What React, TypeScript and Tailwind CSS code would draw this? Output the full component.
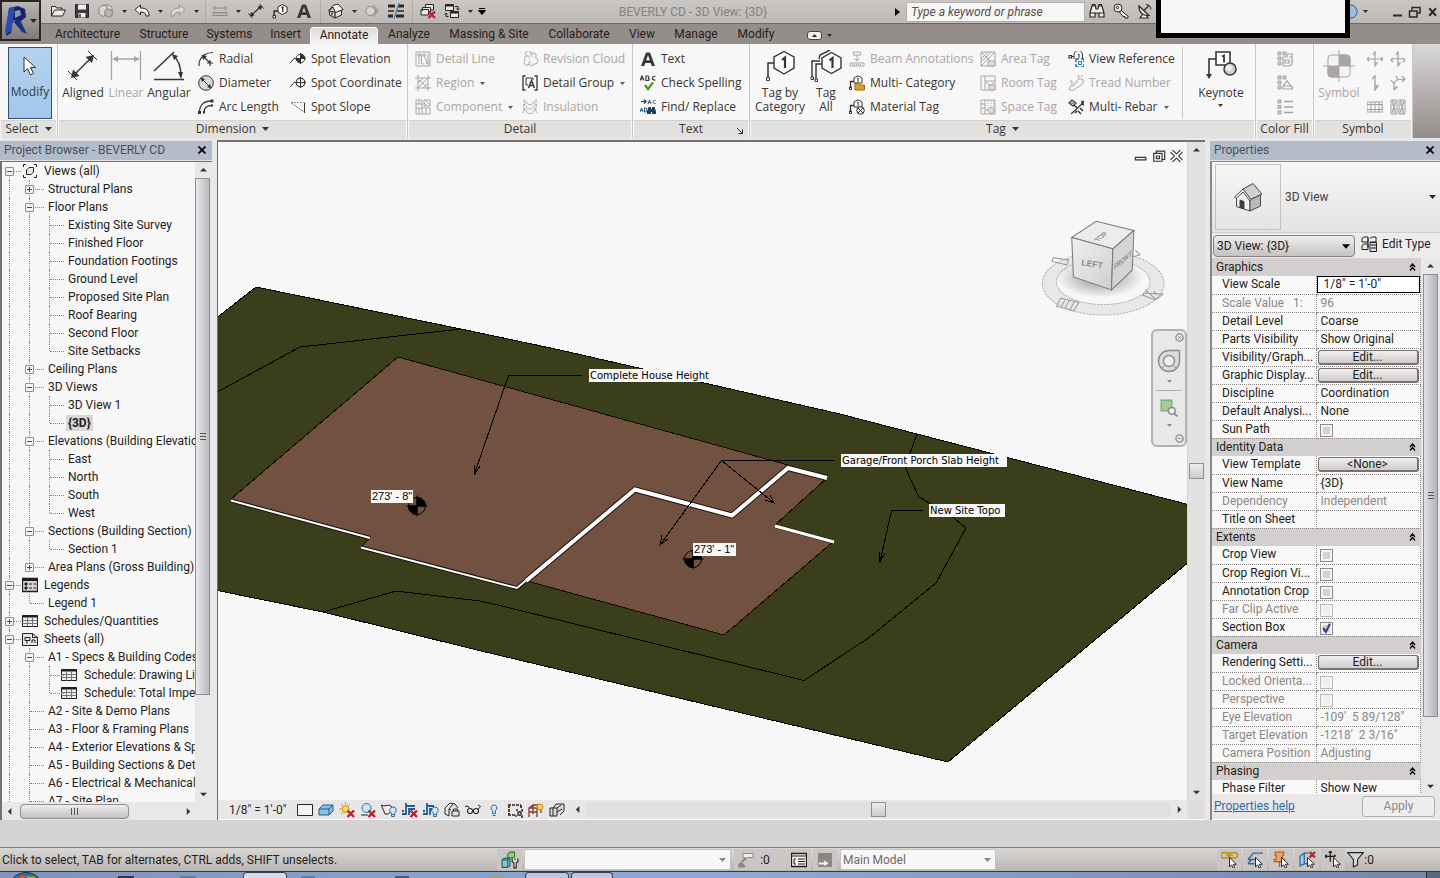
import React from "react";

type Kids = { children?: React.ReactNode };

function Svg({ children, className = "w-4 h-4", box = "0 0 16 16" }: Kids & { className?: string; box?: string }) {
  return (
    <svg viewBox={box} className={"shrink-0 " + className} fill="none" stroke="currentColor" strokeWidth="1" aria-hidden="true">
      {children}
    </svg>
  );
}

function Down({ className = "w-[7px] h-[4px]" }: { className?: string }) {
  return (
    <svg viewBox="0 0 7 4" className={"shrink-0 " + className} fill="currentColor" aria-hidden="true">
      <path d="M0 0H7L3.5 4Z" />
    </svg>
  );
}

const RED_X = <path d="M8.5 8.5L15 15M15 8.5L8.5 15" stroke="#b8202a" strokeWidth="2.4" />;
const BULB = <path d="M10.5 12.5v2h3v-2M12 5a3.2 3.2 0 0 1 1.6 6v1.5h-3.2V11A3.2 3.2 0 0 1 12 5Z" fill="#cfe6fa" stroke="#2d6ea8" />;
const POINTER = <path d="M8 6v9l2-2 1.5 3 1.5-.8-1.5-2.7H14.500Z" fill="#fff" stroke="#222" strokeWidth=".9" />;

const ic = {
  open: <Svg><path d="M1.500 13V3.500h4l1 1.500h5.500v2M1.500 13l3-6H15.500l-3 6Z" fill="#ececec" /></Svg>,
  save: <Svg><path d="M1.500 1.500h13v13h-13Z" fill="#3b3b45" /><path d="M4 1.500h8v5H4ZM4.500 10h7v4.500h-7Z" fill="#eee" stroke="none" /><path d="M6 11v3" strokeWidth="1.500" /></Svg>,
  cubes: <Svg className="w-4 h-4 text-[#8a8683]"><path d="M1 4.500 5 2l4 1.500V11L5 13.500 1 11ZM5 3l4-1.500L14 4v7l-4 2" fill="#d9d6d4" /><circle cx="10.500" cy="10" r="4" fill="#b9b5b2" /></Svg>,
  undo: <Svg><path d="M1 6.500 6.500 2v3C12 5 15 7 15 13H12c0-3-2-4-5.500-4v3Z" fill="#f4f4f4" /></Svg>,
  redo: <Svg className="w-4 h-4 text-[#96918e]"><path d="M15 6.500 9.500 2v3C4 5 1 7 1 13h3c0-3 2-4 5.500-4v3Z" fill="#dedbd9" /></Svg>,
  measure: <Svg className="w-4 h-4 text-[#8d8885]"><path d="M1 5h14M3.500 3 1 5l2.500 2M12.500 3 15 5l-2.500 2M1 9.500h14v3H1ZM4 9.500V11M7 9.500V11M10 9.500V11M13 9.500V11" /></Svg>,
  dim: <Svg><path d="M3 12.500 13 3.500" strokeWidth="1.200" /><path d="M2 13.500 3 9l3.500 3.500ZM14 2.500 9.500 3.500 13 7Z" fill="currentColor" stroke="none" /><path d="m.5 10.500 4 4.500M11.500 1l4 4.500" /></Svg>,
  tag1: <Svg><path d="M2 14V8h4" strokeWidth="1.300" /><path d="M1 12.500h2.500V15H1Z" fill="#fff" /><path d="M10.500 1.500 15 4v5l-4.500 2.500L6 9V4Z" fill="#fff" /><path d="M9.500 5l1.300-1v5" strokeWidth="1.300" /></Svg>,
  bigA: <Svg><path d="M1 15 6 1.500h4L15 15h-3.300l-1-3H5.300l-1 3ZM6.200 9.300h3.600L8 4Z" fill="#3c3733" fillRule="evenodd" stroke="none" /></Svg>,
  home: <Svg><path d="M1.500 8.500V12L7 15l6.500-3V7L7 9Z" fill="#dedede" /><path d="M.5 8 5 2.500l5-1.500L15 6.500 7.500 9.500 5 4Z" fill="#f6f6f6" /><path d="M7 9v6M4 9.500v3" strokeWidth="1.300" /></Svg>,
  section: <Svg className="w-4 h-4 text-[#8f8a87]"><path d="M3 4h6V1l6 7-6 7v-3H3Z" fill="#a5a09d" stroke="none" /><circle cx="6.500" cy="8" r="4.500" fill="#d6d3d1" /></Svg>,
  lines: <Svg><path d="M0 3h7M10 3h6M0 13h5M8 13h8" strokeWidth="3" /><path d="M0 8h6M9 8h7" strokeWidth="1.500" /><path d="m11 0-5 16" stroke="#3b87c8" strokeWidth="1.300" /></Svg>,
  closeWin: <Svg><path d="M5.500 5V1.500h8V7H11M2.500 8V4.500h8V10M1 12V6.500h7.500V12Z" fill="#e8e6e5" />{RED_X}</Svg>,
  switchWin: <Svg><path d="M1.500 1.500h8v6h-8ZM6.500 8.500h8v6h-8Z" fill="#e8e6e5" /><path d="M1.500 2.500h8M6.500 9.500h8" strokeWidth="1.800" /><path d="M11 3.500h3V7M12.500 5.500 14 7l1.500-1.500M4.500 13.500H2V10M.5 11.500 2 10l1.500 1.500" /></Svg>,
  bino: <Svg><path d="M1 10 3 3h3.500l.5 3h2l.5-3H13l2 7v4h-5v-4H6v4H1Z" fill="#eee" strokeWidth="1.200" /><path d="M3.500 3V1.500H6V3M10 3V1.500h2.500V3M1 10h5M10 10h5" strokeWidth="1.200" /></Svg>,
  key: <Svg><path d="M8 7.500 15 13v2h-3v-1.500h-2L6.500 9" fill="#eee" /><circle cx="5" cy="5" r="4" fill="#eee" /><circle cx="4.500" cy="4.500" r="1.200" /></Svg>,
  dish: <Svg><path d="M2 3c0 7 4 10 10 9.500ZM6 11l-3 4h8l-1.500-2.500M7 7.500l5-5" fill="#eee" strokeWidth="1.200" /><path d="M9 1.500c3 0 5 2 5 5" /></Svg>,
  radial: <Svg><path d="M1 15C1 7 6 2 15 1.500" strokeWidth="1.200" /><path d="m5 5 6.500 6.500M12 9v6M9 12h6" strokeWidth="1.200" /><path d="M3.500 3.500 9 5 5 9Z" fill="currentColor" stroke="none" /></Svg>,
  diameter: <Svg><circle cx="8" cy="8" r="7.300" fill="#d8d8d8" /><path d="m3.500 3.500 9 9" /><path d="M2.500 2.500 7 4 4 7ZM13.500 13.500 9 12l3-3Z" fill="currentColor" stroke="none" /></Svg>,
  arc: <Svg><path d="M1.500 13C1.500 6 6 2 13 2M6 13c0-4 3-6.500 8-6.500" strokeWidth="1.300" /><path d="M0 12h3v3H0ZM12.500.5h3v3h-3ZM5 12h2v2.500H5ZM13 5.500h2v2h-2Z" fill="currentColor" stroke="none" /></Svg>,
  spotE: <Svg><path d="M0 12 4 7.500h12M10.500 2v11" /><circle cx="10.500" cy="7.500" r="4.300" fill="#fff" /><path d="M10.500 3.200a4.300 4.300 0 0 1 4.300 4.300h-4.300ZM10.500 11.800a4.300 4.300 0 0 1-4.300-4.300h4.300Z" fill="currentColor" /></Svg>,
  spotC: <Svg><path d="M0 12 4 7.500h12M10.500 2v11" /><circle cx="10.500" cy="7.500" r="4.300" strokeWidth="1.200" /></Svg>,
  spotS: <Svg><path d="M1 3.500h13.500V14" stroke="#8a8a8a" strokeDasharray="2 1" /><path d="m1.500 4 12.500 9" stroke="#2d62a8" strokeDasharray="2 1" /><path d="M14.500 4v10" /></Svg>,
  detLine: <Svg><path d="M1 1h14v14H1ZM4 13V4M4 3.500h2.500V13h3M13 3v10M9 4l3 8" /><path d="M3 3h2v2H3ZM8 3h2v2H8ZM12 11h2v2h-2Z" fill="#f8f7f7" /></Svg>,
  region: <Svg><path d="M3 0v16M13 0v16M0 3h16M0 13h16M3 8l5-5M3 13 13 3M8 13l5-5M4 5l8 7" /></Svg>,
  comp: <Svg><path d="M1 1h6v8h8v6H1ZM9 1h6v6H9ZM1 5h6M1 9h6v6M4 1v4M4 9v6M11 9v6" /><path d="m9 4 3 3M10 1l5 5" /></Svg>,
  cloud: <Svg><path d="M5 5a2.800 2.800 0 1 1 4-2 2.800 2.800 0 1 1 4.500 4 3 3 0 1 1-1.500 6 3 3 0 0 1-5 .5A3 3 0 1 1 3 9a2.600 2.600 0 0 1 2-4Z" /><path d="M5 5c2-.5 3 1 2 2.500M9 3c0 2 1 2.500 2 2.500M7 13.500c-.5-2 .5-3 2-3" /></Svg>,
  group: <Svg><path d="M3.500 1H1v14h2.500M12.500 1H15v14h-2.500" strokeWidth="1.300" /><path d="M4 10V3h7v2M4 10h2" /><path d="m6.500 13 3-7.500 3 7.500M7.500 10.500h4" strokeWidth="1.500" /></Svg>,
  insul: <Svg><path d="M1 1c5 0 2 4.500 7 4.500S10 1 15 1M1 5.500C6 5.500 3 10 8 10s2-4.500 7-4.500M1 10c5 0 2 4.500 7 4.500S10 10 15 10M1 3c2 0 3 1.500 1 3s1 2 1 4-2 2-2 4M15 3c-2 0-3 1.500-1 3s-1 2-1 4 2 2 2 4" /></Svg>,
  abc: <Svg><path d="M0 5.500 2 1l2 4.500M.8 4h2.500M6 1v4.500h2c1.600 0 1.400-2.200 0-2.200C9.300 3.200 9 1 8 1ZM15.500 1.500c-3.500-1.500-4.500 4-.1 3.500" strokeWidth="1.200" /><path d="m5 10 3 4 5-6.500" stroke="#4d9a22" strokeWidth="2.300" /></Svg>,
  find: <Svg><path d="M1 2.500h5M4 .5l2 2-2 2" strokeWidth="1.200" /><path d="m8 5 1.500-4L11 5M8.500 3.500h2M15.500 1.500c-3-1-3.500 3.500 0 3M0 13l1.500-4L3 13M.5 11.500h2M4.500 9v4H6c1 0 1-2 0-2 1 0 .8-2 0-2Z" stroke="#285a80" /><path d="M7 12.500 8.500 8H11v2h1V8h2.500L16 12.500V15h-4v-2h-1v2H7Z" fill="#1f3d5c" stroke="none" /></Svg>,
  beam: <Svg><path d="M4.500 1h7v3h-7ZM8 4v6M5.500 7.500 8 10l2.500-2.500M1 12h14v3H1Z" /><path d="M3 13.500h10" strokeDasharray="1 1" /></Svg>,
  multi: <Svg><path d="M1.500 13V6.500H5" strokeWidth="1.300" /><path d="M.5 12h2v2.500h-2Z" /><path d="M9 .800 13 3v5H5V3Z" fill="#fff" /><path d="M8 3.500 9 3v4" /><path d="M6 8.500h4l1 1.500h4.500v5H6Z" fill="#e0a224" stroke="#9c6a0c" /></Svg>,
  material: <Svg><path d="M1.500 13V6.500H5" strokeWidth="1.300" /><path d="M.5 12h2v2.500h-2Z" /><path d="M9 .800 13 3v5H5V3Z" fill="#fff" /><path d="M8 3.500 9 3v4" /><circle cx="11.500" cy="11.500" r="3.800" fill="#eee" /><path d="m9 14 5-5M9 9l5 5" /></Svg>,
  area: <Svg><path d="M1 1h14v14H1ZM1 1l14 14M15 1 1 15M1 8l7-7M1 11 11 1" /><path d="M8 10h7v5H8Z" fill="#ddd" /></Svg>,
  room: <Svg><path d="M1 1h14v14H1ZM5 1v14M5 6h10" /><path d="m6 7 8 7M14 7l-5 5" /><path d="M9 10h6v5H9Z" fill="#ddd" /></Svg>,
  space: <Svg><path d="M1 1h14v14H1ZM5 1v14M1 5h4M1 9h4M5 11h10" /><path d="M8 2v8M11 2v8M13.500 2v8" strokeDasharray="1 1" /><path d="m11 8 4 3.500-4 3.500-3.500-3.500Z" fill="#ddd" /></Svg>,
  viewRef: <Svg><path d="M1 4.500h2.500V7H1ZM3.500 5.500H6" strokeWidth="1.200" /><path d="M6 8V3.500A4.200 4.200 0 0 1 14.500 4v4M10 3.500l1-.5v4" /><path d="M8 11V8h3M13 8h3v3M16 13v3h-3M11 16H8v-3" stroke="#1f79b8" strokeWidth="1.500" /><path d="M10.500 10.500h3v3h-3Z" stroke="#1f79b8" /></Svg>,
  tread: <Svg><path d="M1 14.500 5 15.500l10-7v-4l-3-1-3 2v2l-3 1v2l-4 1ZM2 6h2v4M9 1h2v3M13 1h2" /></Svg>,
  rebar: <Svg><path d="m1 4 3-3 4 3-3 3ZM3 4h3M6 6l3 3M3 15 15 4" strokeWidth="1.200" /><path d="M14 2.500h2V6l-2-1ZM7 14l2-2M10 12l3 3M12 9l3 3" strokeWidth="1.500" /></Svg>,
  cf1: <Svg><path d="M1 1h3v3H1ZM6 1h3v3H6ZM1 6h3v3H1ZM1 11h3v3H1Z" fill="#d5d2d0" /><path d="M6 6h4V3h5v10l-2 2H6ZM8 9h4v3H8ZM12 6h3" strokeWidth="1.200" /></Svg>,
  cf2: <Svg><path d="M1 1h3v3H1ZM6 1h3v3H6ZM1 6h3v3H1ZM1 11h3v3H1Z" fill="#d5d2d0" /><path d="M6 14v-3l4-5 4 5 1.500 1v2ZM7 11h7" strokeWidth="1.200" /></Svg>,
  cf3: <Svg><path d="M1 1h3v3H1ZM1 6.500h3v3H1ZM1 12h3v3H1Z" fill="#d5d2d0" /><path d="M7 2.500h9M7 8h9M7 13.500h9" strokeWidth="1.300" /></Svg>,
  s1: <Svg><path d="M8 0v15l2-3H8M0 8h16M2 6 0 8l2 2M14 6l2 2-2 2M6 4l2-3" strokeWidth="1.200" /></Svg>,
  s2: <Svg><path d="M8 0v15l2-3H8M1 9c0-2 14-2 14 0M3 11 1 9l2-2M13 7l2 2-2 2M6 4l2-3" strokeWidth="1.200" /></Svg>,
  s3: <Svg><path d="M8 0v15l3-4H8M5 4l3-3" strokeWidth="1.300" /></Svg>,
  s4: <Svg><path d="M4 15V9c0-4 4-5 11-5M4 9 1 5M12 1l3 3-3 3M4 15l3-3H4M8 5 6 1" strokeWidth="1.200" /></Svg>,
  s5: <Svg><path d="M0 3h16v10H0ZM0 5.500h16M0 10.500h16M4 3v10M8 3v10M12 3v10M14 6l2 2-2 2" /></Svg>,
  s6: <Svg><path d="M1 1h6v14H1ZM9 1h6v14H9Z" /><path d="m2 14 4-12M10 14l4-12M3 1v6M11 1v6M5 9v6M13 9v6" strokeWidth="1.300" /></Svg>,
};

const big = {
  aligned: <Svg box="0 0 32 32" className="w-8 h-8"><path d="M6 26 25 7" strokeWidth="1.500" /><path d="M4 28 6 19.500l6.500 6.500ZM27 5l-8.500 2L25 13Z" fill="currentColor" stroke="none" /><path d="m1 21 9 9M21 1l9 9" /></Svg>,
  linear: <Svg box="0 0 32 32" className="w-8 h-8"><path d="M1.500 1v29M30.500 1v29M4 9h24" strokeWidth="1.300" /><path d="m2 9 6-3v6ZM30 9l-6-3v6Z" fill="currentColor" stroke="none" /></Svg>,
  angular: <Svg box="0 0 32 32" className="w-8 h-8"><path d="M1 29.500h30M1 21 21 2M20 5c6 5 8 13 8 22" strokeWidth="1.500" /><path d="m19 4 6 2-4 4ZM28 29l-3-7h5Z" fill="currentColor" stroke="none" /></Svg>,
  tagCat: <Svg box="0 0 32 34" className="w-8 h-[34px]"><path d="M4 29V13h6" strokeWidth="1.500" /><path d="M2.500 27.500h3v3h-3Z" fill="#fff" /><path d="M20 1.500 30 7v11l-10 6-10-6V7Z" fill="#fcfcfc" strokeWidth="1.400" /><path d="m18 10 3-2.500V18" strokeWidth="2.200" /></Svg>,
  tagAll: <Svg box="0 0 32 34" className="w-8 h-[34px]"><path d="M2 28V11h8M6 30V14h7M9 9l1-4 10-5" strokeWidth="1.400" /><path d="M1 27h2.500v2.500H1ZM5 29h2.500v2.500H5Z" fill="#fff" /><path d="M21.500 2.500 31 8v10l-9.500 5.500L12 18V8Z" fill="#fcfcfc" strokeWidth="1.400" /><path d="m19.500 10.500 3-2.500v10" strokeWidth="2.200" /></Svg>,
  keynote: <Svg box="0 0 32 32" className="w-8 h-8"><path d="M4 27V9h7" strokeWidth="1.600" /><path d="m4 29-3-5h6Z" fill="currentColor" stroke="none" /><path d="M11 2h14v13H11Z" fill="#fff" strokeWidth="1.600" /><path d="m17 6.500 2-1v7" strokeWidth="1.800" /><circle cx="25" cy="19" r="6" fill="#cfcfcf" strokeWidth="1.500" /><circle cx="24" cy="18" r="3" fill="#ececec" stroke="none" /></Svg>,
  symbol: <Svg box="0 0 32 32" className="w-8 h-8"><path d="M16 0v32M0 16h32" /><path d="M8 5h16a3 3 0 0 1 3 3v16a3 3 0 0 1-3 3H8a3 3 0 0 1-3-3V8a3 3 0 0 1 3-3Z" fill="#f4f3f3" /><path d="M16 5h8a3 3 0 0 1 3 3v8H16ZM5 16h11v11H8a3 3 0 0 1-3-3Z" fill="currentColor" /></Svg>,
};

function Small({ icon, label, off, caret }: { icon: React.ReactNode; label: string; off?: boolean; caret?: boolean }) {
  return (
    <button type="button" disabled={off} className={"flex h-6 items-center gap-[5px] whitespace-nowrap " + (off ? "text-[#aaa5a3]" : "text-[#3a3431]")}>
      {icon}
      <span>{label}</span>
      {caret && <Down className="ml-px h-[3px] w-[5px] text-[#555]" />}
    </button>
  );
}

function Big({ icon, lines, off, w }: { icon: React.ReactNode; lines: string[]; off?: boolean; w: string }) {
  return (
    <button type="button" disabled={off} className={w + " flex h-[72px] shrink-0 flex-col items-center whitespace-nowrap pt-[3px] leading-[14px] " + (off ? "text-[#aaa5a3]" : "text-[#3a3431]")}>
      <span className="flex h-[36px] items-start">{icon}</span>
      {lines.map((l) => (
        <span key={l}>{l}</span>
      ))}
    </button>
  );
}

function Panel({ title, w, children, arrow, launcher, body = "" }: Kids & { title: string; w: string; arrow?: boolean; launcher?: boolean; body?: string }) {
  return (
    <section className={w + " flex shrink-0 flex-col border-r border-[#c9c5c3]"}>
      <div className={"flex h-[76px] items-start pt-[3px] " + body}>{children}</div>
      <div className="relative mx-px flex h-[18px] items-center justify-center gap-[6px] border-t border-[#d3d0ce] bg-[#e3e1e0] pb-[2px] text-[#3a3431]">
        {title}
        {arrow && <Down className="h-[4px] w-[7px]" />}
        {launcher && (
          <button type="button" aria-label="Text settings" className="absolute right-[5px] top-[7px]">
            <Svg box="0 0 6 6" className="h-[6px] w-[6px]"><path d="M0 0 5 5M5.500 1.500v4h-4" /></Svg>
          </button>
        )}
      </div>
    </section>
  );
}

function QBtn({ icon, label, w = "w-6" }: { icon: React.ReactNode; label: string; w?: string }) {
  return (
    <button type="button" aria-label={label} className={w + " flex h-6 shrink-0 items-center justify-center pb-px"}>
      {icon}
    </button>
  );
}
const C = ({ label }: { label: string }) => <QBtn w="w-3" label={label} icon={<Down className="h-[3px] w-[5px]" />} />;
const Sep = ({ w }: { w: string }) => <span className={w + " flex shrink-0 justify-center"}><span className="h-[22px] w-px bg-[#aeaaa7]" /></span>;

const tabs: [string, string][] = [
  ["Architecture", "w-[85px]"], ["Structure", "w-[68px]"], ["Systems", "w-[63px]"], ["Insert", "w-[49px]"], ["Annotate", "w-[68px]"],
  ["Analyze", "w-[62px]"], ["Massing & Site", "w-[98px]"], ["Collaborate", "w-[82px]"], ["View", "w-[44px]"], ["Manage", "w-[64px]"], ["Modify", "w-[56px]"],
];

function Header() {
  return (
    <header className="relative flex h-11 shrink-0 bg-[#958d8a]">
      <button type="button" aria-label="Application menu" className="flex h-[41px] w-[41px] shrink-0 items-center border-2 border-[#2a2525] bg-linear-to-b from-[#b9b5b3] to-[#7f7a78]">
        <svg viewBox="0 0 28 32" className="h-8 w-7" aria-hidden="true">
          <path d="M7 3 16 1l7 3 1 8-6 5-7-2-2 13-5 3Z" fill="#16236b" />
          <path d="M7 3 13 2 9 26l-5 3-1-3Z" fill="#2c4bb0" />
          <path d="m11 16 7-1 7 14-5-2Z" fill="#1b2f8c" />
          <path d="M13 6l5-1 1 5-6 3Z" fill="#8f97b8" />
        </svg>
        <Down className="h-[4px] w-[7px]" />
      </button>
      <div className="flex min-w-0 flex-1 flex-col">
        <div className="flex h-6 items-center border-b border-[#6d6765] bg-linear-to-b from-[#cbc7c5] to-[#bdb9b6] pl-[5px]">
          <QBtn icon={ic.open} label="Open" /><QBtn icon={ic.save} label="Save" /><QBtn icon={ic.cubes} label="Synchronize" /><C label="Synchronize options" />
          <QBtn icon={ic.undo} label="Undo" /><C label="Undo list" /><QBtn icon={ic.redo} label="Redo" /><C label="Redo list" /><Sep w="w-[6px]" />
          <QBtn icon={ic.measure} label="Measure" /><C label="Measure options" /><QBtn icon={ic.dim} label="Aligned dimension" /><QBtn icon={ic.tag1} label="Tag by category" />
          <QBtn icon={ic.bigA} label="Text" /><Sep w="w-2" />
          <QBtn icon={ic.home} label="Default 3D view" /><C label="3D view options" /><QBtn icon={ic.section} label="Section" /><QBtn icon={ic.lines} label="Thin lines" /><Sep w="w-2" />
          <QBtn icon={ic.closeWin} label="Close hidden windows" /><QBtn icon={ic.switchWin} label="Switch windows" /><C label="Window list" />
          <QBtn w="w-3" label="Customize quick access" icon={<Svg box="0 0 8 7" className="h-[7px] w-[8px] text-black"><path d="M1 .500h6M.5 2.500h7L4 6.500Z" fill="#000" /></Svg>} />
          <h1 className="flex-1 truncate pl-[3px] text-center text-[#84807e]">BEVERLY CD - 3D View: {"{3D}"}</h1>
          <Svg box="0 0 5 8" className="mr-[6px] h-2 w-[5px] text-black"><path d="M0 0 5 4 0 8Z" fill="#000" stroke="none" /></Svg>
          <input type="search" aria-label="Search help" placeholder="Type a keyword or phrase" className="h-5 w-[179px] shrink-0 border border-[#b3afad] bg-[#f7f6f6] px-1 text-xs italic outline-none placeholder:text-[#55504d]" />
          <QBtn icon={ic.bino} label="Find" /><QBtn icon={ic.key} label="Subscription" /><QBtn icon={ic.dish} label="Communication center" />
          <div className="ml-auto flex w-[283px] shrink-0 items-center justify-end">
            <QBtn w="w-[18px]" icon={<Svg className="h-[15px] w-[15px] text-[#31577c]"><circle cx="8" cy="8" r="7" fill="#9fbddb" /></Svg>} label="Help" /><C label="Help options" />
            <button type="button" aria-label="Minimize" className="ml-5"><Svg className="h-4 w-4"><path d="M2 11.500h9" strokeWidth="2" /></Svg></button>
            <button type="button" aria-label="Restore"><Svg className="mr-1 h-4 w-4"><path d="M5 6V3.500h8V9h-2.500M2.500 7h7.500v6H2.500Z" strokeWidth="1.500" /></Svg></button>
            <button type="button" aria-label="Close"><Svg className="mr-px h-3 w-3"><path d="m3 3 9 10M12 3 3 13" strokeWidth="2.500" /></Svg></button>
          </div>
        </div>
        <nav className="flex h-5 items-end pl-1" aria-label="Ribbon tabs">
          {tabs.map(([t, w]) => (
            <button
              type="button"
              key={t}
              className={w + " h-[17px] shrink-0 whitespace-nowrap pb-[3px] leading-[14px] text-[#231d1b] " + (t === "Annotate" ? "rounded-t-sm border border-b-0 border-white bg-linear-to-b from-[#dcdad9] to-[#f8f7f7]" : "")}
            >
              {t}
            </button>
          ))}
          <button type="button" aria-label="Ribbon display" className="ml-[23px] flex h-[18px] items-center gap-[5px]">
            <span className="flex h-[9px] w-[15px] items-center justify-center rounded-[3px] border border-[#444] bg-[#eee]">
              <Down className="h-[3px] w-[5px] rotate-180" />
            </span>
            <Down className="h-[3px] w-[5px]" />
          </button>
        </nav>
      </div>
      <div className="absolute right-[90px] top-0 h-[38px] w-[194px] border-x-[5px] border-b-[5px] border-black bg-[#f8f7f8]" />
    </header>
  );
}

function Ribbon() {
  return (
    <div className="flex h-[94px] shrink-0 bg-[#f8f7f7] [font-family:'Open_Sans','Noto_Sans',sans-serif]">
      <Panel title="Select" w="w-[58px]" arrow body="pl-[8px]">
        <button type="button" className="flex h-[72px] w-[44px] flex-col items-center border border-[#32516e] bg-linear-to-b from-[#b4d2f0] to-[#a3c6ea] pt-[8px]">
          <Svg box="0 0 14 20" className="h-5 w-[14px]"><path d="M1 1v15l3.500-3.500 3 6.500 3-1.500-3-6H12.500Z" fill="#fff" stroke="#333" /></Svg>
          <span className="pt-2 text-[#2b3c50]">Modify</span>
        </button>
      </Panel>
      <Panel title="Dimension" w="w-[350px]" arrow body="pl-[3px]">
        <Big w="w-[44px]" icon={big.aligned} lines={["Aligned"]} />
        <Big w="w-[42px]" icon={big.linear} lines={["Linear"]} off />
        <Big w="w-[44px]" icon={big.angular} lines={["Angular"]} />
        <div className="ml-[7px] w-[92px]">
          <Small icon={ic.radial} label="Radial" />
          <Small icon={ic.diameter} label="Diameter" />
          <Small icon={ic.arc} label="Arc Length" />
        </div>
        <div>
          <Small icon={ic.spotE} label="Spot Elevation" />
          <Small icon={ic.spotC} label="Spot Coordinate" />
          <Small icon={ic.spotS} label="Spot Slope" />
        </div>
      </Panel>
      <Panel title="Detail" w="w-[225px]" body="pl-[7px]">
        <div className="w-[107px]">
          <Small icon={ic.detLine} label="Detail Line" off />
          <Small icon={ic.region} label="Region" off caret />
          <Small icon={ic.comp} label="Component" off caret />
        </div>
        <div>
          <Small icon={ic.cloud} label="Revision Cloud" off />
          <Small icon={ic.group} label="Detail Group" caret />
          <Small icon={ic.insul} label="Insulation" off />
        </div>
      </Panel>
      <Panel title="Text" w="w-[117px]" launcher body="pl-[7px]">
        <div>
          <Small icon={ic.bigA} label="Text" />
          <Small icon={ic.abc} label="Check Spelling" />
          <Small icon={ic.find} label="Find/ Replace" />
        </div>
      </Panel>
      <Panel title="Tag" w="w-[506px]" arrow body="pl-[3px]">
        <Big w="w-[54px]" icon={big.tagCat} lines={["Tag by", "Category"]} />
        <Big w="w-[38px]" icon={big.tagAll} lines={["Tag", "All"]} />
        <div className="ml-1 w-[131px]">
          <Small icon={ic.beam} label="Beam Annotations" off />
          <Small icon={ic.multi} label="Multi- Category" />
          <Small icon={ic.material} label="Material Tag" />
        </div>
        <div className="w-[88px]">
          <Small icon={ic.area} label="Area Tag" off />
          <Small icon={ic.room} label="Room Tag" off />
          <Small icon={ic.space} label="Space Tag" off />
        </div>
        <div className="w-[115px] border-r border-[#c9c5c3]">
          <Small icon={ic.viewRef} label="View Reference" />
          <Small icon={ic.tread} label="Tread Number" off />
          <Small icon={ic.rebar} label="Multi- Rebar" caret />
        </div>
        <div className="flex flex-1 flex-col items-center pl-1">
          <button type="button" className="flex flex-col items-center pt-[3px] leading-[14px] text-[#3a3431]">
            <span className="h-[36px]">{big.keynote}</span>
            Keynote
            <Down className="mt-[4px] h-[3px] w-[5px]" />
          </button>
        </div>
      </Panel>
      <Panel title="Color Fill" w="w-[58px]" body="justify-center text-[#a5a09e]">
        <div>
          {[ic.cf1, ic.cf2, ic.cf3].map((x, i) => (
            <button type="button" disabled key={i} aria-label={["Duct legend", "Pipe legend", "Color fill legend"][i]} className="flex h-6 items-center">{x}</button>
          ))}
        </div>
      </Panel>
      <Panel title="Symbol" w="w-[99px]" body="text-[#a5a09e]">
        <Big w="w-[50px]" icon={big.symbol} lines={["Symbol"]} off />
        <div className="grid grid-cols-2 gap-x-[7px] pl-[3px]">
          {[ic.s1, ic.s2, ic.s3, ic.s4, ic.s5, ic.s6].map((x, i) => (
            <button type="button" disabled key={i} aria-label={["Span direction", "Beam", "Stair path", "Area reinforcement", "Path reinforcement", "Fabric reinforcement"][i]} className="flex h-6 items-center">{x}</button>
          ))}
        </div>
      </Panel>
      <div className="flex-1 bg-linear-to-b from-[#dad8d8] to-[#948d8b]" />
    </div>
  );
}

function Arrow({ dir }: { dir: "up" | "down" | "left" | "right" }) {
  const d = { up: "M0 5 4 1 8 5Z", down: "M0 2H8L4 6Z", left: "M5 0V8L1 4Z", right: "M2 0V8L6 4Z" }[dir];
  return (
    <button type="button" aria-label={"Scroll " + dir} className="flex h-4 w-4 shrink-0 items-center justify-center text-[#333]">
      <Svg box="0 0 8 8" className="h-[7px] w-[7px]"><path d={d} fill="currentColor" stroke="none" /></Svg>
    </button>
  );
}

type Row = { t: string; g: string; box?: "+" | "-"; icon?: "views" | "legend" | "table" | "sheet"; sel?: boolean };
// Guide codes: "|" a passing line, "T" a branch, "L" the last branch, "R" the root.
const rows: Row[] = [
  { t: "Views (all)", g: "R", box: "-", icon: "views" },
  { t: "Structural Plans", g: "|T", box: "+" },
  { t: "Floor Plans", g: "|T", box: "-" },
  { t: "Existing Site Survey", g: "||T" },
  { t: "Finished Floor", g: "||T" },
  { t: "Foundation Footings", g: "||T" },
  { t: "Ground Level", g: "||T" },
  { t: "Proposed Site Plan", g: "||T" },
  { t: "Roof Bearing", g: "||T" },
  { t: "Second Floor", g: "||T" },
  { t: "Site Setbacks", g: "||L" },
  { t: "Ceiling Plans", g: "|T", box: "+" },
  { t: "3D Views", g: "|T", box: "-" },
  { t: "3D View 1", g: "||T" },
  { t: "{3D}", g: "||L", sel: true },
  { t: "Elevations (Building Elevation)", g: "|T", box: "-" },
  { t: "East", g: "||T" },
  { t: "North", g: "||T" },
  { t: "South", g: "||T" },
  { t: "West", g: "||L" },
  { t: "Sections (Building Section)", g: "|T", box: "-" },
  { t: "Section 1", g: "||L" },
  { t: "Area Plans (Gross Building)", g: "|L", box: "+" },
  { t: "Legends", g: "T", box: "-", icon: "legend" },
  { t: "Legend 1", g: "|L" },
  { t: "Schedules/Quantities", g: "T", box: "+", icon: "table" },
  { t: "Sheets (all)", g: "T", box: "-", icon: "sheet" },
  { t: "A1 - Specs & Building Codes", g: "|T", box: "-" },
  { t: "Schedule: Drawing List", g: "||T", icon: "table" },
  { t: "Schedule: Total Impervious", g: "||L", icon: "table" },
  { t: "A2 - Site & Demo Plans", g: "|T" },
  { t: "A3 - Floor & Framing Plans", g: "|T" },
  { t: "A4 - Exterior Elevations & Specs", g: "|T" },
  { t: "A5 - Building Sections & Details", g: "|T" },
  { t: "A6 - Electrical & Mechanical", g: "|T" },
  { t: "A7 - Site Plan", g: "|T" },
];

const treeIcons = {
  views: <Svg><path d="M4 1.500H1.500V4M12 1.500h2.500V4M4 14.500H1.500V12M12 14.500h2.500V12" /><path d="M4.500 7 7 4.500h4.500V9L9 11.500H4.500Z" fill="#e9e9e9" /></Svg>,
  legend: <Svg><path d="M.5 1.500h15v13H.5Z" fill="#d4d4da" strokeWidth="1.300" /><path d="M.5 3h15" strokeWidth="2" /><path d="M3 6h2v2H3ZM3 10h2v2H3Z" fill="currentColor" /><path d="M7 7h3M11.500 7H14M7 11h3M11.500 11H14" /></Svg>,
  table: <Svg><path d="M.5 2.500h15v11H.5Z" fill="#eee" /><path d="M.5 3.500h15" strokeWidth="2" /><path d="M.5 7.500h15M.5 10.500h15M5.500 4v9.500M10.500 4v9.500" stroke="#777" /></Svg>,
  sheet: <Svg><path d="M.5 2.500h10l5 4v8H.5Z" fill="#e7e7ea" /><path d="M10.500 2.500v4h5M3 6.500h5v3H3ZM5 9.500v3M10 12V9h3v3" /></Svg>,
};

function Guide({ code, last, box, root }: { code: string; last: boolean; box?: string; root?: boolean }) {
  const w = !last ? "w-5" : root ? "w-[22px]" : "w-7";
  return (
    <span className={"relative flex h-[18px] shrink-0 " + w}>
      <span className={"w-[10px] border-r border-dotted border-[#8b8785] " + (code === "L" ? "h-[9px]" : code === "R" ? "mt-[9px] h-[9px]" : "h-[18px]")} />
      {last && <span className={"border-b border-dotted border-[#8b8785] " + (code === "R" ? "h-[10px] w-[11px]" : root ? "h-[10px] w-[11px]" : "h-[10px] w-[14px]")} />}
      {box && (
        <span className="absolute left-[5px] top-[5px] h-[9px] w-[9px] rounded-[1px] border border-[#8d8a92] bg-[#f3f2f2]">
          <Svg box="0 0 7 7" className="h-[7px] w-[7px] text-[#3f4a7a]"><path d={box === "+" ? "M1 3.500h5M3.500 1v5" : "M1 3.500h5"} /></Svg>
        </span>
      )}
    </span>
  );
}

function PaneTitle({ children }: Kids) {
  return (
    <div className="flex h-[19px] shrink-0 items-center justify-between bg-[#b3bdca] pb-px pl-1 pr-[6px] text-[#46505c]">
      <h2>{children}</h2>
      <button type="button" aria-label="Close pane"><Svg box="0 0 8 8" className="h-2 w-2 text-black"><path d="m.5.500 7 7M7.500.500l-7 7" strokeWidth="1.700" /></Svg></button>
    </div>
  );
}

function Browser() {
  return (
    <aside className="flex w-[212px] shrink-0 flex-col bg-[#e4e2e2] pt-px">
      <PaneTitle>Project Browser - BEVERLY CD</PaneTitle>
      <div className="mt-px flex min-h-0 flex-1 flex-col border-l-2 border-t border-[#77716f] bg-[#f8f7f7]">
        <div className="flex min-h-0 flex-1">
          <ul className="-ml-[2px] min-w-0 flex-1 overflow-hidden text-[#231d1b]">
            {rows.map((r, i) => (
              <li key={i} className="flex h-[18px] items-center overflow-hidden whitespace-nowrap">
                {r.g.split("").map((c, k) => (
                  <Guide key={k} code={c} last={k === r.g.length - 1} box={k === r.g.length - 1 ? r.box : undefined} root={r.g.length === 1} />
                ))}
                {r.icon && <span className={r.g.length === 1 ? "mr-[6px]" : "-ml-[7px] mr-[7px]"}>{treeIcons[r.icon]}</span>}
                <span className={r.sel ? "-ml-[2px] bg-[#d9d6d5] px-[2px] font-bold" : ""}>{r.t}</span>
              </li>
            ))}
          </ul>
          <div className="flex w-[17px] shrink-0 flex-col bg-[#e9e7e7]">
            <Arrow dir="up" />
            <div className="flex w-[15px] basis-[517px] items-center justify-center border border-[#918d93] bg-linear-to-r from-[#eae9eb] to-[#bbb9c0]">
              <span className="h-[7px] w-[6px] border-y border-[#555] bg-linear-to-b from-transparent from-40% via-[#555] via-50% to-transparent to-60%" />
            </div>
            <div className="flex-1" />
            <Arrow dir="down" />
          </div>
        </div>
        <div className="flex h-[18px] items-center bg-[#e9e7e7]">
          <Arrow dir="left" />
          <div className="ml-[2px] flex h-[15px] w-[109px] items-center justify-center gap-[2px] rounded-sm border border-[#918d93] bg-linear-to-b from-[#efeeee] to-[#c3c0c2]">
            <span className="h-[7px] w-px bg-[#555]" /><span className="h-[7px] w-px bg-[#555]" /><span className="h-[7px] w-px bg-[#555]" />
          </div>
          <div className="flex-1" />
          <Arrow dir="right" />
          <span className="w-4" />
        </div>
      </div>
    </aside>
  );
}

function Spot({ x, y }: { x: number; y: number }) {
  return (
    <g stroke="#000" strokeWidth="1">
      <circle cx={x} cy={y} r="8.500" fill="#735140" />
      <path d={`M${x} ${y - 8.5}a8.500 8.500 0 0 1 8.500 8.500h-8.500ZM${x} ${y + 8.5}a8.500 8.500 0 0 1-8.500-8.500h8.500Z`} fill="#000" />
      <path d={`M${x - 10.5} ${y}h21M${x} ${y - 10.5}v21`} />
    </g>
  );
}

function Label({ x, y, w, children, small }: { x: number; y: number; w: number; children: string; small?: boolean }) {
  return (
    <g>
      <rect x={x} y={y} width={w} height="13" fill="#f8f7f7" />
      <text x={x + 1} y={y + 10} fill="#000" className={small ? "text-[11px]" : "text-[10px]"} fontFamily={small ? "'Liberation Sans', sans-serif" : "'DejaVu Sans', sans-serif"}>{children}</text>
    </g>
  );
}

function Scene() {
  return (
    <svg viewBox="218 142 969 658" preserveAspectRatio="xMidYMid slice" className="block h-full w-full" role="img" aria-label="3D view of the site and slabs">
      <g shapeRendering="crispEdges">
        <path d="M210 323 256 287 461 329 560 350 840 414 917 434 1190 505V561L948 762 477 650 323 612 210 589Z" fill="#3a3e1b" stroke="#000" />
        <path d="M210 396 300 347 461 329M323 612 396 591 480 601 502 606 804 680.500 870 637 936 583 966 528 950 515 919 497 905 467 917 434" fill="none" stroke="#000" />
        <path d="M398 357 788 465 827 478 775 525 834 541 724 635 527 581 517 588 361 547 371 537 231 499Z" fill="#735140" stroke="#110b08" />
      </g>
      <g fill="none" stroke="#1a120e" strokeLinejoin="miter">
        <path d="M231 500.500 370 538M361 547.500 517 588 530 577M775 526 834 542" strokeWidth="4" />
        <path d="M231 500.500 370 538M361 547.500 517 588 530 577" stroke="#fff" strokeWidth="2" />
        <path d="M775 526 834 542" stroke="#fff" strokeWidth="3" />
        <path d="M526 581 635 489.500 732 515.500 788 468 827 478" strokeWidth="6" />
        <path d="M526 581 635 489.500 732 515.500 788 468 827 478" stroke="#fff" strokeWidth="4" />
      </g>
      <g fill="none" stroke="#000" shapeRendering="crispEdges">
        <path d="M582 375.500H508.500L474 475M474 465v10l6-9" />
        <path d="M834 460.500H721.500L660 545M662 535l-2 10 8-6M721.500 460.500 774 503M765 500l9 3-4-8" />
        <path d="M923 510.500H891.500L880 562M879 552l1 10 5-9" />
      </g>
      <Spot x={417} y={506} />
      <Spot x={693} y={559} />
      <Label x={589} y={369} w={125}>Complete House Height</Label>
      <Label x={841} y={454} w={166}>Garage/Front Porch Slab Height</Label>
      <Label x={929} y={504} w={76}>New Site Topo</Label>
      <Label x={371} y={490} w={42} small>273' - 8"</Label>
      <Label x={693} y={543} w={43} small>273' - 1"</Label>
    </svg>
  );
}

function ViewCube() {
  return (
    <svg viewBox="60 240 380 290" className="h-[97px] w-[127px]" role="img" aria-label="View cube">
      <defs>
        <radialGradient id="shade"><stop offset="0" stopColor="#777" stopOpacity=".8" /><stop offset="1" stopColor="#777" stopOpacity="0" /></radialGradient>
        <linearGradient id="face" x2="1" y2="1"><stop offset="0" stopColor="#f0f0f0" /><stop offset="1" stopColor="#cfcfcf" /></linearGradient>
      </defs>
      <path d="M67 430a182 94 0 1 1 364 0a182 94 0 1 1-364 0ZM109 425a140 68 0 1 0 280 0a140 68 0 1 0-280 0Z" fill="#e9e8e8" stroke="#b3b1b1" strokeWidth="3" strokeDasharray="7 3" fillRule="evenodd" />
      <ellipse cx="240" cy="412" rx="130" ry="60" fill="url(#shade)" />
      <g fill="none" stroke="#9a9898" strokeWidth="3">
        <path d="m122 474 54 12-15 26-52-14ZM135 480l-11 18M148 480l-12 22M162 486l-12 22M100 352l46 8-6 14-44-10ZM345 330l14 14-20 6M372 458l56 4-22 17-38-14ZM375 448l30 28M400 452l10 12" />
      </g>
      <path d="M155 292 228 244 341 271 278 326Z" fill="#ececec" stroke="#777" strokeWidth="3" />
      <path d="M155 292 278 326 274 449 160 410Z" fill="url(#face)" stroke="#777" strokeWidth="3" />
      <path d="M278 326 341 271 336 390 274 449Z" fill="#d6d5d5" stroke="#777" strokeWidth="3" />
      <g fill="#8d8b8b" fontFamily="'Liberation Sans', sans-serif" fontWeight="bold" textAnchor="middle">
        <text transform="translate(215 380) rotate(9)" fontSize="26">LEFT</text>
        <text transform="matrix(.6 -.5 0 1 308 369)" fontSize="25">FRONT</text>
        <text transform="matrix(.6 -.5 .9 .25 250 292)" fontSize="25">TOP</text>
      </g>
    </svg>
  );
}

const X10 = "M2 2 14 14M14 2 2 14";
const viewIcons: [string, React.ReactNode][] = [
  ["Detail level", <Svg><path d="M.5 2.500h15v11H.5Z" fill="#f4f4f4" /></Svg>],
  ["Visual style", <Svg className="w-4 h-4 text-[#205d8e]"><path d="M1 7 5 3h10v6l-4 4H1Z" fill="#8cc0e8" /><path d="M1 7h10v6M11 7l4-4" /></Svg>],
  ["Sun path", <Svg><circle cx="6.500" cy="7" r="3.500" fill="#f8d865" stroke="#d58a10" /><path d="M6.500 0v2M0 7h2M2 2l1.500 1.500M11 2 9.500 3.500M2 12l1.500-1.500" stroke="#d58a10" />{RED_X}</Svg>],
  ["Shadows", <Svg><circle cx="6.500" cy="6" r="4.500" fill="#cfe3f5" stroke="#2d6ea8" /><path d="M1 13h7" />{RED_X}</Svg>],
  ["Rendering", <Svg><path d="m0 3 3 1 5-1 3 2v4l-4 3H4L2 7Z" fill="#eee" />{BULB}</Svg>],
  ["Crop view", <Svg><path d="M0 12h4V4h9M4 1v3M7 13V7h6M0 9h2" stroke="#205d8e" strokeWidth="1.800" />{RED_X}</Svg>],
  ["Show crop region", <Svg><path d="M0 12h4V4h7M4 1v3M7 13V7h2M0 9h2" stroke="#205d8e" strokeWidth="1.800" />{BULB}</Svg>],
  ["Lock 3D view", <Svg><path d="M1 6 6 1l5 1 3 4M1 6v6l4 2V7l4-5M5 7l2 1" fill="#e5e5e5" /><path d="M8 9h7v5H8ZM9.500 9V7h4v2" fill="#dce6ee" /></Svg>],
  ["Temporary hide", <Svg><path d="M0 4.500 3 4l2 3.500" /><circle cx="5" cy="9" r="2.500" fill="#e9f0f6" strokeWidth="1.200" /><circle cx="11" cy="9" r="2.500" fill="#e9f0f6" strokeWidth="1.200" /><path d="M7.500 8.500h1M13 7.500l2.500-3L13 3" /></Svg>],
  ["Reveal hidden", <Svg><path d="M6.500 13.500h3M8 3a3 3 0 0 1 1.500 5.600v3h-3v-3A3 3 0 0 1 8 3Z" fill="#cfe6fa" stroke="#2d6ea8" /></Svg>],
  ["View properties", <Svg><path d="M1 3h13M1 13h7M2 3v10M14 3v4" strokeWidth="1.700" strokeDasharray="3 1" /><path d="M9 8h2M14 8h2v2M9 15v-2M14 15h2v-2M11 10h3v3h-3Z" strokeWidth="1.300" /></Svg>],
  ["Analytical model", <Svg><path d="M1 15V6l4-3h8v8M5 3v9M1 6h8v9M1 10h8M9 6l4-3" stroke="#8b3b32" strokeWidth="1.300" /><circle cx="12" cy="5" r="3" fill="#f7ce4c" stroke="#c98a10" /></Svg>],
  ["Displacement sets", <Svg><path d="M1 6h7v8H1ZM4 6l3-4h8v7l-4 4M8 6l4-3M8 10l5-3M4 6v8" fill="#d9d9d9" /></Svg>],
];

function Viewport() {
  return (
    <main className="flex min-w-0 flex-1 flex-col border-l border-t-2 border-[#77716f] bg-[#f8f7f8]">
      <div className="flex min-h-0 flex-1">
        <div className="relative min-w-0 flex-1 overflow-hidden">
          <Scene />
          <div className="absolute right-1 top-[6px] flex gap-1 text-[#333]">
            <button type="button" aria-label="Minimize view"><Svg className="h-4 w-[14px]"><path d="M1.500 9.500h12v3h-12Z" fill="#fff" strokeWidth="1.300" /></Svg></button>
            <button type="button" aria-label="Restore view"><Svg className="h-4 w-[14px]"><path d="M5 5V2.500h9.500V12H12M2 5h9.500v9H2ZM5 8h3.500v3H5Z" fill="#fff" strokeWidth="1.400" /></Svg></button>
            <button type="button" aria-label="Close view"><Svg className="h-4 w-[13px]"><path d={X10} strokeWidth="5" /><path d={X10} stroke="#fff" strokeWidth="2.200" /></Svg></button>
          </div>
          <div className="absolute right-[20px] top-[78px]"><ViewCube /></div>
          <div className="absolute right-0 top-[187px] flex h-[118px] w-9 flex-col items-center justify-between rounded-md border-2 border-[#b3b0b3] bg-[#e9e8e8] py-[2px] text-[#8d8a8a]">
            <button type="button" aria-label="Close navigation bar" className="mr-px self-end"><Svg box="0 0 10 10" className="h-[9px] w-[9px]"><circle cx="5" cy="5" r="4" strokeWidth="1.500" /><path d="m3.500 3.500 3 3M6.500 3.500l-3 3" /></Svg></button>
            <button type="button" aria-label="Steering wheel"><Svg box="0 0 24 24" className="h-6 w-6"><path d="M12 1.500h10.500V12A10.500 10.500 0 1 1 12 1.500Z" fill="#dcdcde" strokeWidth="1.400" /><circle cx="12" cy="12" r="5.500" fill="#efefef" strokeWidth="1.400" /><path d="m4.500 19.500 3-3M19.500 19.500l-3-3" /></Svg></button>
            <Down className="h-[3px] w-[5px]" />
            <span className="h-px w-[26px] bg-[#b0adad]" />
            <button type="button" aria-label="Zoom region"><Svg className="h-[18px] w-[18px]"><path d="M1 1h9.500v9.500H1Z" fill="#a5cc97" stroke="#7da074" /><circle cx="10.500" cy="10.500" r="3" fill="#eee" strokeWidth="1.300" /><path d="m12.500 12.500 3 3" strokeWidth="1.600" /></Svg></button>
            <Down className="h-[3px] w-[5px]" />
            <button type="button" aria-label="Navigation options" className="mr-px self-end"><Svg box="0 0 10 10" className="h-[9px] w-[9px]"><circle cx="5" cy="5" r="4" strokeWidth="1.500" /><path d="M3 5h4" /></Svg></button>
          </div>
        </div>
        <div className="flex w-[18px] shrink-0 flex-col items-center border-l border-[#d5d3d3] bg-[#e3e1e1]">
          <Arrow dir="up" />
          <div className="flex-1" />
          <div className="h-4 w-[15px] border border-[#928f92] bg-linear-to-b from-[#ededee] to-[#cbc9cb]" />
          <div className="flex-1" />
          <Arrow dir="down" />
        </div>
      </div>
      <div className="flex h-5 shrink-0 items-center border-b border-white bg-[#e8e6e6]">
        <span className="w-[79px] shrink-0 whitespace-nowrap pl-[11px]">1/8" = 1'-0"</span>
        {viewIcons.map(([l, x]) => (
          <button type="button" key={l} aria-label={l} className="flex w-[21px] shrink-0 items-center">{x}</button>
        ))}
        <Arrow dir="left" />
        <div className="flex flex-1 items-center justify-center bg-[#e1dfdf]"><div className="h-[15px] w-[15px] border border-[#928f92] bg-linear-to-b from-[#ededee] to-[#cbc9cb]" /></div>
        <Arrow dir="right" />
        <span className="w-[18px] self-stretch bg-[#dedcdc]" />
      </div>
    </main>
  );
}

type Prop = { k: string; v?: string; kind?: "head" | "edit" | "check" | "box"; on?: boolean; off?: boolean };
const props: Prop[] = [
  { k: "Graphics", kind: "head" },
  { k: "View Scale", v: "1/8\" = 1'-0\"", kind: "box" },
  { k: "Scale Value   1:", v: "96", off: true },
  { k: "Detail Level", v: "Coarse" },
  { k: "Parts Visibility", v: "Show Original" },
  { k: "Visibility/Graph...", v: "Edit...", kind: "edit" },
  { k: "Graphic Display...", v: "Edit...", kind: "edit" },
  { k: "Discipline", v: "Coordination" },
  { k: "Default Analysi...", v: "None" },
  { k: "Sun Path", kind: "check" },
  { k: "Identity Data", kind: "head" },
  { k: "View Template", v: "<None>", kind: "edit" },
  { k: "View Name", v: "{3D}" },
  { k: "Dependency", v: "Independent", off: true },
  { k: "Title on Sheet" },
  { k: "Extents", kind: "head" },
  { k: "Crop View", kind: "check" },
  { k: "Crop Region Vi...", kind: "check" },
  { k: "Annotation Crop", kind: "check" },
  { k: "Far Clip Active", kind: "check", off: true },
  { k: "Section Box", kind: "check", on: true },
  { k: "Camera", kind: "head" },
  { k: "Rendering Setti...", v: "Edit...", kind: "edit" },
  { k: "Locked Orienta...", kind: "check", off: true },
  { k: "Perspective", kind: "check", off: true },
  { k: "Eye Elevation", v: "-109'  5 89/128\"", off: true },
  { k: "Target Elevation", v: "-1218'  2 3/16\"", off: true },
  { k: "Camera Position", v: "Adjusting", off: true },
  { k: "Phasing", kind: "head" },
  { k: "Phase Filter", v: "Show New" },
];

function PropValue({ p, id }: { p: Prop; id: string }) {
  if (p.kind === "box") return <input id={id} defaultValue={p.v} className="block h-[17px] w-full border border-black bg-white px-[6px] outline-none" />;
  if (p.kind === "edit")
    return (
      <button id={id} type="button" className="mx-px block h-[15px] w-[101px] rounded-[3px] border border-b-2 border-r-2 border-[#77716f] bg-linear-to-b from-[#f0efef] to-[#cfcccb] leading-[12px] text-[#231d1b]">
        {p.v}
      </button>
    );
  if (p.kind === "check")
    return (
      <span className="relative ml-[3px] mt-[2px] block h-[13px] w-[13px]">
        <input
          id={id}
          type="checkbox"
          defaultChecked={p.on}
          disabled={p.off}
          className="block h-[13px] w-[13px] appearance-none border border-[#8d8a8a] bg-[#d3d1d1] shadow-[inset_0_0_0_2px_#f4f4f4] disabled:border-[#bbb8b8] disabled:bg-[#f0efef]"
        />
        {p.on && <Svg className="pointer-events-none absolute left-px top-px h-[11px] w-[11px] text-[#33417c]"><path d="m3 7 4 6 6-12" strokeWidth="3" /></Svg>}
      </span>
    );
  return <span className="whitespace-pre pl-1">{p.v}</span>;
}

function Properties() {
  return (
    <aside className="flex w-[230px] shrink-0 flex-col bg-[#e9e7e8] pt-px">
      <PaneTitle>Properties</PaneTitle>
      <div className="mt-px flex min-h-0 flex-1 flex-col border-l-2 border-t border-[#8b8684]">
        <div className="flex h-[71px] shrink-0 items-center border-b border-[#cfcdcd] bg-linear-to-b from-[#f8f7f8] to-[#e4e2e3] pl-[3px] pr-1">
          <div className="flex h-[66px] w-[66px] items-center justify-center border border-[#c5c2c2] text-[#4a4644]">
            <Svg box="0 0 30 30" className="h-[30px] w-[30px]">
              <path d="M3.500 15 10 8l7 9.500V29L3.500 24.500Z" fill="#f1f1f1" />
              <path d="M17 17.500 27.500 13v11L17 29Z" fill="#b9b9bb" />
              <path d="M10 7 20 1.500l9 10.500-11.500 5.500Z" fill="#cfcfd1" />
              <path d="M10 7 1.500 15l1.500 1.500 7-6.500 7 9 1-1.500Z" fill="#f4f4f4" />
              <path d="m7 18 4 1.500V27l-4-1.500Z" fill="#3b3b3d" />
            </Svg>
          </div>
          <span className="flex-1 pl-1 text-[#45403e]">3D View</span>
          <Down />
        </div>
        <div className="flex h-[25px] shrink-0 items-center bg-[#ececec]">
          <div className="relative ml-px w-[142px]">
            <select aria-label="Element" className="h-[22px] w-full appearance-none rounded-sm border border-[#85807e] bg-linear-to-b from-[#efeeee] to-[#c5c2c1] pl-[3px] text-[#231d1b] outline-none">
              <option>3D View: {"{3D}"}</option>
            </select>
            <Down className="pointer-events-none absolute right-[5px] top-[9px] h-[5px] w-[8px] text-black" />
          </div>
          <button type="button" className="ml-[6px] flex items-center gap-[5px] whitespace-nowrap pb-[3px] text-[#231d1b]">
            <Svg><path d="M1 2.500 3 1h4v5H1ZM9 2.500 11 1h4v5H9M1 9.500 3 8h4v5.500H1ZM7 2v10" fill="#eee" /><path d="M9 6.500h6.500v9H9Z" fill="#cfdef0" /><path d="M10 9h5M10 12h5" /></Svg>
            Edit Type
          </button>
        </div>
        <div className="flex min-h-0 flex-1 overflow-hidden">
          <div className="min-w-0 flex-1 overflow-hidden bg-[#f9f8f8]">
            <table className="w-full table-fixed border-collapse">
              <colgroup><col className="w-[104px]" /><col /></colgroup>
              <tbody>
                {props.map((p, i) =>
                  p.kind === "head" ? (
                    <tr key={i} className="bg-[#d2cfce] text-[#231d1b]">
                      <th colSpan={2} className="h-[18px] p-0 pl-1 text-left font-normal leading-[17px]">
                        <span className="flex items-center justify-between pr-[5px]">
                          {p.k}
                          <Svg box="0 0 7 8" className="h-2 w-[7px] text-black"><path d="m1 4 2.500-3L6 4M1 7.500l2.500-3 2.500 3" strokeWidth="1.300" /></Svg>
                        </span>
                      </th>
                    </tr>
                  ) : (
                    <tr key={i} className={p.off ? "text-[#8b8786]" : "text-[#231d1b]"}>
                      <th scope="row" className="h-[18px] overflow-hidden whitespace-pre border-b border-r border-dotted border-[#8b8786] p-0 pl-[10px] text-left font-normal leading-[17px]">
                        <label htmlFor={"prop-" + i}>{p.k}</label>
                      </th>
                      <td className="h-[18px] overflow-hidden border-b border-r border-dotted border-[#8b8786] p-0 leading-[17px]">
                        <PropValue p={p} id={"prop-" + i} />
                      </td>
                    </tr>
                  ),
                )}
              </tbody>
            </table>
          </div>
          <div className="flex w-[19px] shrink-0 flex-col items-center bg-[#e9e7e7]">
            <Arrow dir="up" />
            <div className="flex w-[15px] basis-[443px] items-center justify-center border border-[#918d93] bg-linear-to-r from-[#e2e1e3] to-[#b5b3ba]">
              <span className="h-[7px] w-[6px] border-y border-[#555] bg-linear-to-b from-transparent from-40% via-[#555] via-50% to-transparent to-60%" />
            </div>
            <div className="flex-1" />
            <Arrow dir="down" />
          </div>
        </div>
        <div className="flex h-[26px] shrink-0 items-center justify-between border-b border-white pb-px pl-[2px] pr-[5px]">
          <a href="#help" className="text-[#2f6cab] underline">Properties help</a>
          <button type="button" disabled className="h-[21px] w-[73px] rounded-[3px] border border-[#aeabab] bg-[#efeeee] text-[#8b8786]">Apply</button>
        </div>
      </div>
    </aside>
  );
}

const statusIcons: [string, React.ReactNode][] = [
  ["Select links", <Svg className="h-[17px] w-[17px]"><path d="M2 1.500h3a2 2 0 0 1 0 5H3a2 2 0 0 1-1-5ZM10 1.500h3a2 2 0 0 1 0 5h-3a2 2 0 0 1 0-5ZM5 4h6" stroke="#c8930f" strokeWidth="1.600" />{POINTER}</Svg>],
  ["Select underlay", <Svg className="h-[17px] w-[17px]"><path d="m1 8 5-6h9M1 8h7M1 12l3-4M1 12h6" stroke="#2d6ea8" strokeWidth="1.400" />{POINTER}</Svg>],
  ["Select pinned", <Svg className="h-[17px] w-[17px]"><path d="M2 1h8v3H9v4h2v2H1V8h2V4H2ZM6 10v5" fill="#f0a160" stroke="#b05a18" />{POINTER}</Svg>],
  ["Select by face", <Svg className="h-[17px] w-[17px]"><path d="m1 5 4-3v10l-4 2ZM5 2h4M5 12h3" fill="#a9cbe8" stroke="#2d6ea8" strokeWidth="1.200" /><path d="m10 1 5 5M15 1l-5 5" stroke="#b8202a" strokeWidth="2" />{POINTER}</Svg>],
  ["Drag on selection", <Svg className="h-[17px] w-[17px]"><path d="M5 0v10M0 5h10M3.500 1.500 5 0l1.500 1.500M1.500 3.500 0 5l1.500 1.500M8.500 3.500 10 5" strokeWidth="1.200" />{POINTER}</Svg>],
];

function Status() {
  const cell = "flex h-[21px] shrink-0 items-center justify-center bg-[#c9c6c4]";
  return (
    <footer className="flex h-[24px] shrink-0 items-center border-t border-[#7f7a7a] bg-linear-to-b from-[#d9d7d6] to-[#b9b5b2] text-[#231d1b]">
      <span className="w-[497px] shrink-0 pl-[2px]">Click to select, TAB for alternates, CTRL adds, SHIFT unselects.</span>
      <button type="button" aria-label="Worksets" className={cell + " w-[25px]"}>
        <Svg className="h-[18px] w-[18px]"><path d="m1 8 2-1.500h5V13l-2 1.500H1ZM1 8h5v6.500M6 8l2-1.500" fill="#8cc4cc" stroke="#1f6672" /><path d="m6 3 2-2h4v4l-1.500 1H6Z" fill="#9cc97c" stroke="#3d7428" /><path d="M10 6.500v3l1.500 1v4.500h2v-4.500L15 9.500v-3M12.500 6.500v2" fill="#eee" /></Svg>
      </button>
      <div className="relative ml-[2px] w-[207px] shrink-0">
        <select aria-label="Active workset" className="block h-[21px] w-full appearance-none border border-[#c4c1c0] bg-[#f8f7f8]"><option></option></select>
        <Down className="pointer-events-none absolute right-[5px] top-[9px] h-[4px] w-[7px] text-[#8b8786]" />
      </div>
      <span className={cell + " ml-[3px] w-[52px] gap-[6px] pr-3"}>
        <Svg className="w-4 h-4 text-[#8b8786]"><path d="M5 1.500h10v4H9L7 8V5.500H5Z" fill="#eee" /><path d="M0 15c1-5 3-5 4-4s2 1 3 4Z" fill="currentColor" /><path d="m4 10 4-4" strokeWidth="2" /></Svg>:0
      </span>
      <button type="button" aria-label="Design options" className={cell + " ml-px w-[24px]"}><Svg><path d="M.5 1.500h15v13H.5Z" fill="#f4f4f4" strokeWidth="1.300" /><path d="M.5 4h15M3 7h2M3 7v5h2M7 7h7M7 9.500h7M7 12h7" /></Svg></button>
      <button type="button" aria-label="Add to option set" disabled className={cell + " ml-[2px] w-[24px]"}><Svg><path d="M1 1h14v14H1Z" fill="#8b8683" stroke="none" /><path d="M1 10h6V7l5 4.500L7 15v-2H1Z" fill="#f2f2f2" stroke="#8b8683" /></Svg></button>
      <div className="relative ml-[3px] w-[156px] shrink-0">
        <select aria-label="Design option" defaultValue="Main Model" className="block h-[21px] w-full appearance-none border border-[#c4c1c0] bg-[#f8f7f8] pl-[2px] text-[#6f6b6a]"><option>Main Model</option></select>
        <Down className="pointer-events-none absolute right-[5px] top-[9px] h-[4px] w-[7px] text-[#8b8786]" />
      </div>
      <div className="ml-auto flex items-center gap-[2px] pr-[66px]">
        {statusIcons.map(([l, x]) => (
          <button type="button" key={l} aria-label={l} className={cell + " w-6"}>{x}</button>
        ))}
        <button type="button" aria-label="Filter" className="flex items-center">
          <Svg className="h-[17px] w-[17px]"><path d="M.5 1.500h15L10 8v5l-4 2V8Z" fill="#cfd6dc" /></Svg>:0
        </button>
      </div>
    </footer>
  );
}

function Taskbar() {
  return (
    <div className="flex h-[7px] shrink-0 overflow-hidden border-t border-[#2d3a50] bg-linear-to-r from-[#7e95b8] via-[#8eabd3] to-[#7388a8]">
      <svg viewBox="0 0 36 7" className="ml-2 h-[7px] w-9 shrink-0" aria-hidden="true">
        <circle cx="18" cy="18" r="17.500" fill="#3a6a94" stroke="#1b3350" />
        <path d="M10 7c2-4 5-4 8-3v3Z" fill="#d8562a" /><path d="M19 4c3 1 5 1 8 0v3h-8Z" fill="#7fb643" />
      </svg>
      <span className="ml-[74px] h-[2px] w-[16px] self-end bg-[#2c3850]" />
      <span className="ml-[46px] h-[2px] w-[16px] self-end bg-[#5e7aa5]" />
      <span className="ml-[47px] w-[44px] rounded-t-sm border border-b-0 border-[#30415c] bg-[#d4dce9]" />
      <span className="ml-[14px] h-[2px] w-[14px] self-end bg-[#4f80ba]" />
      <span className="ml-[80px] h-[2px] w-[14px] self-end bg-[#4b5a75]" />
      <span className="ml-[80px] h-[2px] w-[14px] self-end bg-[#a59a7a]" />
      <span className="ml-[22px] w-[44px] rounded-t-sm border border-b-0 border-[#30415c] bg-[#bdc8e0]" />
      <span className="ml-[2px] w-[42px] rounded-t-sm border border-b-0 border-[#30415c] bg-[#bdc8e0]" />
      <span className="ml-auto w-[14px] border-l border-[#22303f] bg-[#59697f]" />
    </div>
  );
}

export default function App() {
  return (
    <div className="flex h-screen flex-col overflow-hidden bg-[#d5d3d3] text-xs leading-4 text-[#2b2523] [font-family:Roboto,'Open_Sans',sans-serif]">
      <Header />
      <Ribbon />
      <div className="h-[2px] shrink-0 bg-[#e9e8e9]" />
      <div className="flex min-h-0 flex-1 gap-[5px] bg-[#e9e8e9]">
        <Browser />
        <Viewport />
        <Properties />
      </div>
      <div className="h-[27px] shrink-0 bg-[#d5d3d4]" />
      <Status />
      <Taskbar />
    </div>
  );
}
